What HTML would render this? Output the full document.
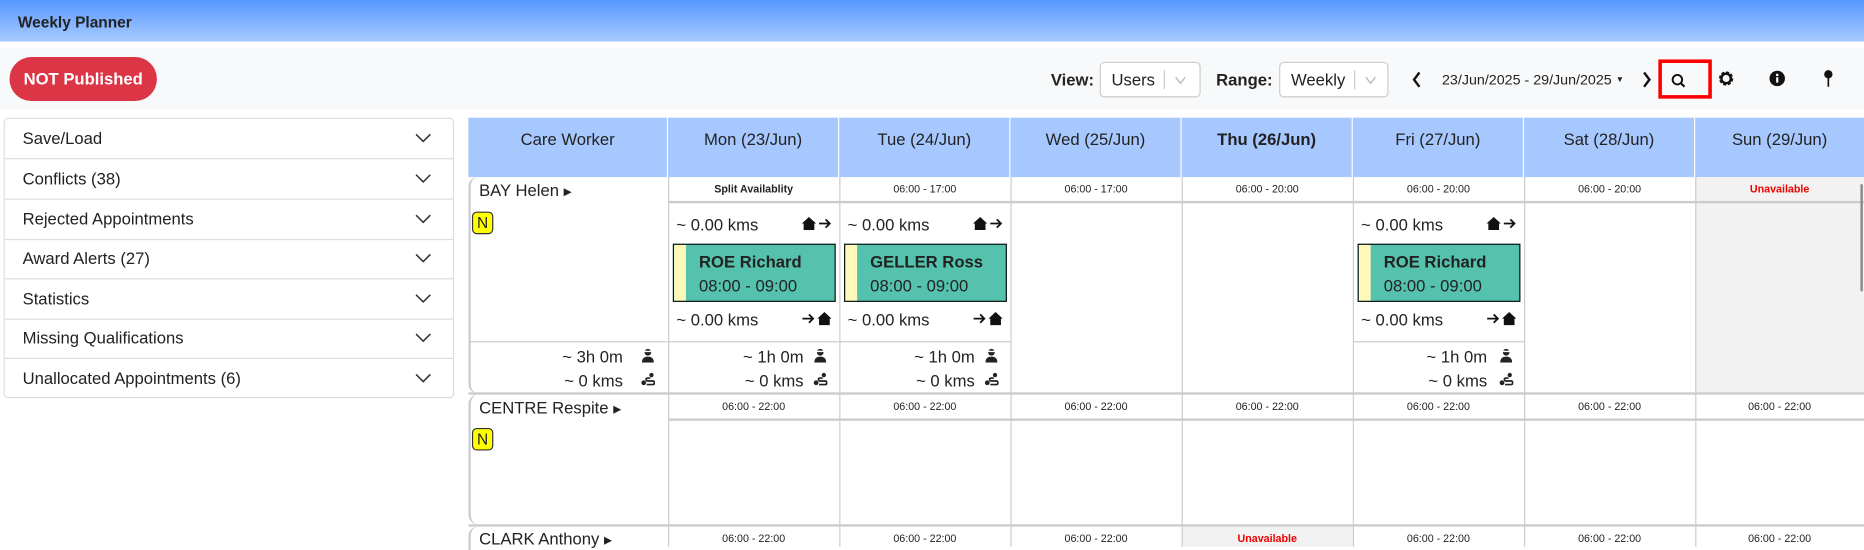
<!DOCTYPE html>
<html><head><meta charset="utf-8"><style>
*{box-sizing:border-box;margin:0;padding:0}
html,body{width:1864px;height:547px;overflow:hidden;background:#fff;font-family:"Liberation Sans",Arial,sans-serif;color:#222}
#w{position:absolute;left:0;top:0;width:1568px;height:460px;transform:scale(1.18878);transform-origin:0 0}
.a{position:absolute}
.hdr{left:0;top:0;width:1568px;height:35px;background:linear-gradient(#5598ff,#a9caff);}
.tb{left:0;top:40px;width:1568px;height:52px;background:#f8f9fa}
.pill{left:8px;top:48px;width:124px;height:37px;border-radius:19px;background:#dc3545;color:#fff;font-weight:bold;font-size:14px;text-align:center;line-height:37px}
.sel{height:30px;top:52px;border:1px solid #ccc;border-radius:4px;background:#fff;font-size:14px;line-height:28px;padding-left:9px}
.sel .sep{position:absolute;top:6px;bottom:6px;width:1px;background:#ccc}
.panel{left:3px;top:99px;width:379px;height:236px;border:1px solid #ddd;border-radius:4px;background:#fff}
.row{position:absolute;left:0;width:377px;height:34px;border-bottom:1px solid #ddd;font-size:14px;line-height:33px;padding-left:15px}
.chev{position:absolute;right:18px;top:11px;width:14px;height:10px}
.hc{top:99px;height:50px;background:#a6c8ff;font-size:14px;text-align:center;line-height:36px;border-right:1px solid #fff}
.av{font-size:9px;text-align:center;font-weight:normal}
.vl{width:1px;background:#ccc}
.hl{height:2px;background:#ccc}
.t14{font-size:14px}
.card{width:137px;height:49px;border:1px solid #111;background:#55c2ad;padding-left:21px;font-size:14px;overflow:hidden}
.card:before{content:"";position:absolute;left:0;top:0;bottom:0;width:10px;background:#fff8b8}
</style></head><body><div id="w">
<div class="a hdr"></div>
<div class="a" style="left:15px;top:11px;font-size:13px;font-weight:bold;color:#222">Weekly Planner</div>
<div class="a tb"></div>
<div class="a pill">NOT Published</div>
<div class="a" style="left:884px;top:59px;font-size:14px;font-weight:bold">View:</div>
<div class="a sel" style="left:925px;width:85px">Users<span class="sep" style="left:53px"></span><svg class="a" style="left:62px;top:11px" width="10" height="7" viewBox="0 0 10 7"><polyline points="1,1 5,6 9,1" fill="none" stroke="#bbb" stroke-width="1.2"/></svg></div>
<div class="a" style="left:1023px;top:59px;font-size:14px;font-weight:bold">Range:</div>
<div class="a sel" style="left:1076px;width:92px">Weekly<span class="sep" style="left:62px"></span><svg class="a" style="left:71px;top:11px" width="10" height="7" viewBox="0 0 10 7"><polyline points="1,1 5,6 9,1" fill="none" stroke="#bbb" stroke-width="1.2"/></svg></div>
<svg class="a" style="left:1188px;top:60px" width="8" height="14" viewBox="0 0 8 14"><polyline points="6,1 1.5,7 6,13" fill="none" stroke="#111" stroke-width="2"/></svg>
<div class="a" style="left:1213px;top:60px;font-size:12px">23/Jun/2025 - 29/Jun/2025 <span style="font-size:7px;vertical-align:2px">&#9660;</span></div>
<svg class="a" style="left:1381px;top:60px" width="8" height="14" viewBox="0 0 8 14"><polyline points="2,1 6.5,7 2,13" fill="none" stroke="#111" stroke-width="2"/></svg>
<div class="a" style="left:1395px;top:50px;width:45px;height:33px;border:3px solid #f00"></div>
<svg class="a" style="left:1405px;top:61px" width="14" height="14" viewBox="0 0 14 14"><circle cx="6" cy="6" r="4" fill="none" stroke="#111" stroke-width="1.6"/><line x1="9" y1="9" x2="12" y2="12" stroke="#111" stroke-width="1.8"/></svg>
<svg class="a" style="left:1445px;top:59px" width="14" height="14" viewBox="0 0 14 14"><circle cx="7" cy="7" r="4.5" fill="none" stroke="#111" stroke-width="3" stroke-dasharray="2.2 1.3"/><circle cx="7" cy="7" r="4" fill="none" stroke="#111" stroke-width="2"/></svg>
<svg class="a" style="left:1488px;top:59px" width="14" height="14" viewBox="0 0 14 14"><circle cx="7" cy="7" r="6.5" fill="#111"/><rect x="6.1" y="6" width="1.8" height="4.5" fill="#fff"/><circle cx="7" cy="4" r="1.1" fill="#fff"/></svg>
<svg class="a" style="left:1533px;top:58px" width="10" height="16" viewBox="0 0 10 16"><circle cx="5" cy="4.5" r="3.5" fill="#111"/><rect x="4.3" y="7" width="1.4" height="8" fill="#111"/></svg>

<div class="a panel">
<div class="row" style="top:0">Save/Load<svg class="chev" viewBox="0 0 14 10"><polyline points="1,2 7,8 13,2" fill="none" stroke="#333" stroke-width="1.3"/></svg></div>
<div class="row" style="top:34px">Conflicts (38)<svg class="chev" viewBox="0 0 14 10"><polyline points="1,2 7,8 13,2" fill="none" stroke="#333" stroke-width="1.3"/></svg></div>
<div class="row" style="top:68px">Rejected Appointments<svg class="chev" viewBox="0 0 14 10"><polyline points="1,2 7,8 13,2" fill="none" stroke="#333" stroke-width="1.3"/></svg></div>
<div class="row" style="top:101px">Award Alerts (27)<svg class="chev" viewBox="0 0 14 10"><polyline points="1,2 7,8 13,2" fill="none" stroke="#333" stroke-width="1.3"/></svg></div>
<div class="row" style="top:135px">Statistics<svg class="chev" viewBox="0 0 14 10"><polyline points="1,2 7,8 13,2" fill="none" stroke="#333" stroke-width="1.3"/></svg></div>
<div class="row" style="top:168px">Missing Qualifications<svg class="chev" viewBox="0 0 14 10"><polyline points="1,2 7,8 13,2" fill="none" stroke="#333" stroke-width="1.3"/></svg></div>
<div class="row" style="top:202px;border-bottom:none">Unallocated Appointments (6)<svg class="chev" viewBox="0 0 14 10"><polyline points="1,2 7,8 13,2" fill="none" stroke="#333" stroke-width="1.3"/></svg></div>
</div>

<div class="a hc" style="left:394px;width:168px">Care Worker</div>
<div class="a hc" style="left:562px;width:144px">Mon (23/Jun)</div>
<div class="a hc" style="left:706px;width:144px">Tue (24/Jun)</div>
<div class="a hc" style="left:850px;width:144px">Wed (25/Jun)</div>
<div class="a hc" style="left:994px;width:144px;font-weight:bold">Thu (26/Jun)</div>
<div class="a hc" style="left:1138px;width:144px">Fri (27/Jun)</div>
<div class="a hc" style="left:1282px;width:144px">Sat (28/Jun)</div>
<div class="a hc" style="left:1426px;width:142px;border-right:none">Sun (29/Jun)</div>

<div class="a" style="left:1426px;top:149px;width:142px;height:181px;background:#f2f2f2"></div>
<div class="a" style="left:994px;top:443px;width:144px;height:17px;background:#f2f2f2"></div>

<div class="a" style="left:394px;top:149px;width:169px;height:182px;border-left:2px solid #ccc;border-top-left-radius:8px;border-bottom-left-radius:8px"></div>
<div class="a" style="left:394px;top:332px;width:169px;height:109px;border-left:2px solid #ccc;border-top-left-radius:8px;border-bottom-left-radius:8px"></div>
<div class="a" style="left:394px;top:443px;width:169px;height:20px;border-left:2px solid #ccc;border-top-left-radius:8px"></div>

<div class="a vl" style="left:562px;top:149px;height:311px"></div>
<div class="a vl" style="left:706px;top:149px;height:311px"></div>
<div class="a vl" style="left:850px;top:149px;height:311px"></div>
<div class="a vl" style="left:994px;top:149px;height:311px"></div>
<div class="a vl" style="left:1138px;top:149px;height:311px"></div>
<div class="a vl" style="left:1282px;top:149px;height:311px"></div>
<div class="a vl" style="left:1426px;top:149px;height:311px"></div>

<div class="a hl" style="left:562px;top:169px;width:1006px"></div>
<div class="a hl" style="left:394px;top:287px;width:312px;height:1px"></div>
<div class="a hl" style="left:706px;top:287px;width:144px;height:1px"></div>
<div class="a hl" style="left:1138px;top:287px;width:144px;height:1px"></div>
<div class="a hl" style="left:394px;top:330px;width:1174px"></div>
<div class="a hl" style="left:562px;top:352px;width:1006px"></div>
<div class="a hl" style="left:394px;top:441px;width:1174px"></div>

<div class="a" style="left:1565px;top:155px;width:2px;height:90px;background:#888"></div>

<svg width="0" height="0" style="position:absolute"><defs>
<symbol id="u" viewBox="0 0 12 12"><circle cx="6" cy="3.3" r="2.8" fill="#222"/><rect x="3" y="2" width="6" height="1.2" fill="#fff"/><path d="M1 12 Q1 7 6 7 Q11 7 11 12Z" fill="#222"/></symbol>
<symbol id="r" viewBox="0 0 12 12"><circle cx="2.5" cy="9" r="2" fill="#222"/><circle cx="9" cy="2.5" r="1.8" fill="#222"/><path d="M5 10.5 H10 Q11.5 10.5 11.5 9 Q11.5 7.5 10 7.5 H6 Q4.5 7.5 4.5 6 Q4.5 5 6 5 H8" fill="none" stroke="#222" stroke-width="1.4"/></symbol>
<symbol id="hr" viewBox="0 0 26 12"><path d="M0.5 6 L6.5 0.5 L12.5 6 H11 V11.5 H2 V6Z" fill="#111"/><path d="M15 6 H24 M20.5 2.5 L24 6 L20.5 9.5" fill="none" stroke="#111" stroke-width="1.5"/></symbol>
<symbol id="rh" viewBox="0 0 26 12"><path d="M1 6 H10 M6.5 2.5 L10 6 L6.5 9.5" fill="none" stroke="#111" stroke-width="1.5"/><path d="M13.5 6 L19.5 0.5 L25.5 6 H24 V11.5 H15 V6Z" fill="#111"/></symbol>
</defs></svg>

<!-- row 1 -->
<div class="a t14" style="left:403px;top:152px">BAY Helen <span style="font-size:9px;vertical-align:1px">&#9654;</span></div>
<div class="a" style="left:397px;top:178px;width:18px;height:19px;background:#ffff00;border:1px solid #333;border-radius:4px;font-size:13px;text-align:center;line-height:17px">N</div>
<div class="a av" style="left:562px;top:154px;width:144px;font-weight:bold">Split Availablity</div>
<div class="a av" style="left:706px;top:154px;width:144px">06:00 - 17:00</div>
<div class="a av" style="left:850px;top:154px;width:144px">06:00 - 17:00</div>
<div class="a av" style="left:994px;top:154px;width:144px">06:00 - 20:00</div>
<div class="a av" style="left:1138px;top:154px;width:144px">06:00 - 20:00</div>
<div class="a av" style="left:1282px;top:154px;width:144px">06:00 - 20:00</div>
<div class="a av" style="left:1426px;top:154px;width:142px;color:#e00;font-weight:bold">Unavailable</div>

<div class="a t14" style="left:569px;top:181px">~ 0.00 kms</div>
<svg class="a" style="left:674px;top:182px" width="26" height="12"><use href="#hr"/></svg>
<div class="a card" style="left:566px;top:205px"><div style="font-weight:bold;margin-top:6px">ROE Richard</div><div style="margin-top:4px">08:00 - 09:00</div></div>
<div class="a t14" style="left:569px;top:261px">~ 0.00 kms</div>
<svg class="a" style="left:674px;top:262px" width="26" height="12"><use href="#rh"/></svg>

<div class="a t14" style="left:713px;top:181px">~ 0.00 kms</div>
<svg class="a" style="left:818px;top:182px" width="26" height="12"><use href="#hr"/></svg>
<div class="a card" style="left:710px;top:205px"><div style="font-weight:bold;margin-top:6px">GELLER Ross</div><div style="margin-top:4px">08:00 - 09:00</div></div>
<div class="a t14" style="left:713px;top:261px">~ 0.00 kms</div>
<svg class="a" style="left:818px;top:262px" width="26" height="12"><use href="#rh"/></svg>

<div class="a t14" style="left:1145px;top:181px">~ 0.00 kms</div>
<svg class="a" style="left:1250px;top:182px" width="26" height="12"><use href="#hr"/></svg>
<div class="a card" style="left:1142px;top:205px"><div style="font-weight:bold;margin-top:6px">ROE Richard</div><div style="margin-top:4px">08:00 - 09:00</div></div>
<div class="a t14" style="left:1145px;top:261px">~ 0.00 kms</div>
<svg class="a" style="left:1250px;top:262px" width="26" height="12"><use href="#rh"/></svg>

<div class="a t14" style="left:394px;top:292px;width:130px;text-align:right">~ 3h 0m</div>
<div class="a t14" style="left:394px;top:312px;width:130px;text-align:right">~ 0 kms</div>
<div class="a t14" style="left:562px;top:292px;width:114px;text-align:right">~ 1h 0m</div>
<div class="a t14" style="left:562px;top:312px;width:114px;text-align:right">~ 0 kms</div>
<div class="a t14" style="left:706px;top:292px;width:114px;text-align:right">~ 1h 0m</div>
<div class="a t14" style="left:706px;top:312px;width:114px;text-align:right">~ 0 kms</div>
<div class="a t14" style="left:1138px;top:292px;width:113px;text-align:right">~ 1h 0m</div>
<div class="a t14" style="left:1138px;top:312px;width:113px;text-align:right">~ 0 kms</div>
<svg class="a" style="left:539px;top:293px" width="12" height="12"><use href="#u"/></svg>
<svg class="a" style="left:539px;top:313px" width="12" height="12"><use href="#r"/></svg>
<svg class="a" style="left:684px;top:293px" width="12" height="12"><use href="#u"/></svg>
<svg class="a" style="left:684px;top:313px" width="12" height="12"><use href="#r"/></svg>
<svg class="a" style="left:828px;top:293px" width="12" height="12"><use href="#u"/></svg>
<svg class="a" style="left:828px;top:313px" width="12" height="12"><use href="#r"/></svg>
<svg class="a" style="left:1261px;top:293px" width="12" height="12"><use href="#u"/></svg>
<svg class="a" style="left:1261px;top:313px" width="12" height="12"><use href="#r"/></svg>

<!-- row 2 -->
<div class="a t14" style="left:403px;top:335px">CENTRE Respite <span style="font-size:9px;vertical-align:1px">&#9654;</span></div>
<div class="a" style="left:397px;top:360px;width:18px;height:19px;background:#ffff00;border:1px solid #333;border-radius:4px;font-size:13px;text-align:center;line-height:17px">N</div>
<div class="a av" style="left:562px;top:337px;width:144px">06:00 - 22:00</div>
<div class="a av" style="left:706px;top:337px;width:144px">06:00 - 22:00</div>
<div class="a av" style="left:850px;top:337px;width:144px">06:00 - 22:00</div>
<div class="a av" style="left:994px;top:337px;width:144px">06:00 - 22:00</div>
<div class="a av" style="left:1138px;top:337px;width:144px">06:00 - 22:00</div>
<div class="a av" style="left:1282px;top:337px;width:144px">06:00 - 22:00</div>
<div class="a av" style="left:1426px;top:337px;width:142px">06:00 - 22:00</div>

<!-- row 3 -->
<div class="a t14" style="left:403px;top:445px">CLARK Anthony <span style="font-size:9px;vertical-align:1px">&#9654;</span></div>
<div class="a av" style="left:562px;top:448px;width:144px">06:00 - 22:00</div>
<div class="a av" style="left:706px;top:448px;width:144px">06:00 - 22:00</div>
<div class="a av" style="left:850px;top:448px;width:144px">06:00 - 22:00</div>
<div class="a av" style="left:994px;top:448px;width:144px;color:#e00;font-weight:bold">Unavailable</div>
<div class="a av" style="left:1138px;top:448px;width:144px">06:00 - 22:00</div>
<div class="a av" style="left:1282px;top:448px;width:144px">06:00 - 22:00</div>
<div class="a av" style="left:1426px;top:448px;width:142px">06:00 - 22:00</div>
</div></body></html>
